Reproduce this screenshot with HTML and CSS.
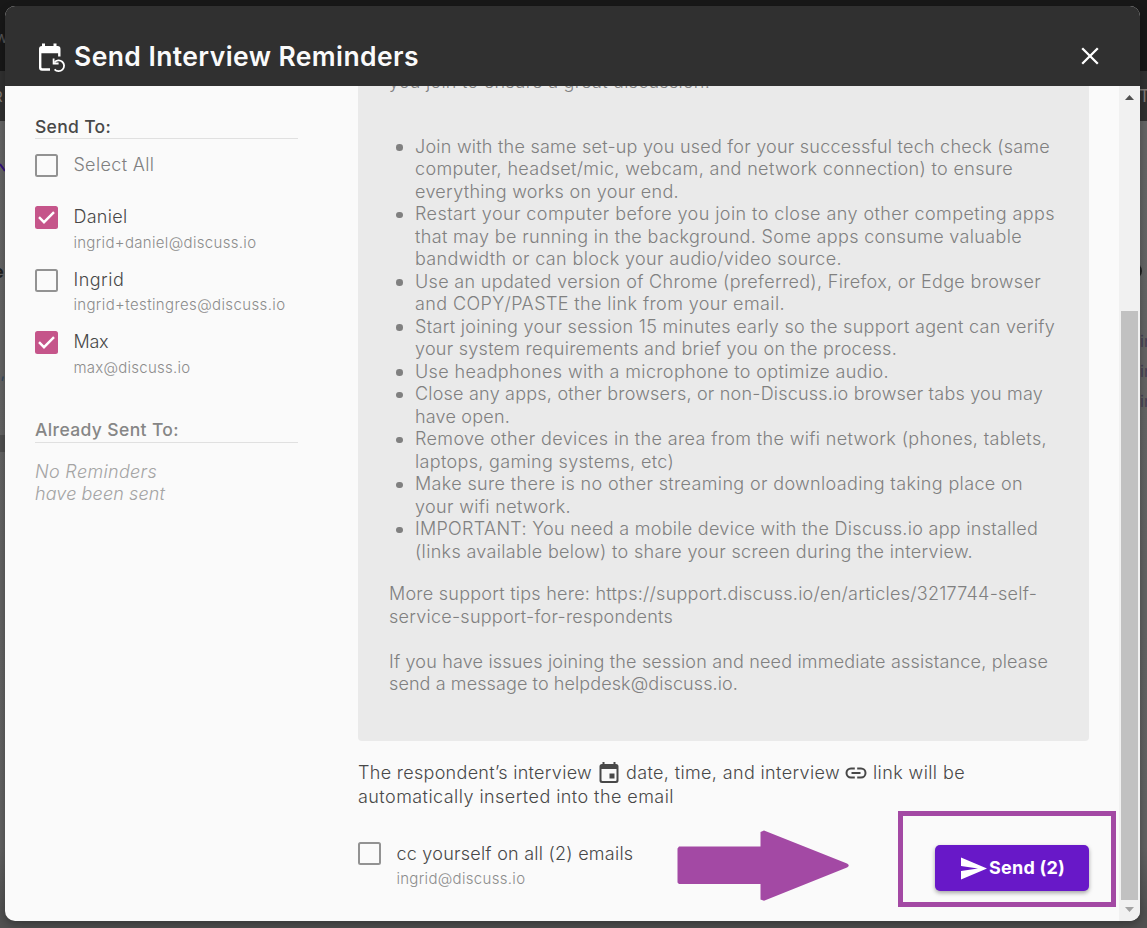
FILE: index.html
```html
<!DOCTYPE html>
<html lang="en">
<head>
<meta charset="utf-8">
<title>Send Interview Reminders</title>
<link rel="stylesheet" href="styles.css">
</head>
<body>
<div class="page">
  <div class="page-nav"></div>
  <div class="page-tabs"></div>
  <div class="page-body"></div>
  <span class="peek peek-nav">w</span>
  <span class="peek peek-r">R</span>
  <span class="peek peek-t">T</span>
  <span class="peek peek-e">e</span>
  <span class="peek peek-s">s,</span>
  <span class="peek-row"></span>
  <svg class="peek-line" width="5" height="14" viewBox="0 0 5 14"><path d="M0 2 5 9" stroke="#34117a" stroke-width="2"/></svg>
  <span class="peek-dot"></span>
  <span class="peek peek-in in1">in</span>
  <span class="peek peek-in in2">in</span>
  <span class="peek peek-in in3">in</span>
</div>

<div class="modal">
  <header class="modal-head">
    <svg class="head-icon" width="28" height="30" viewBox="0 0 28 30">
      <path d="M4 .5h3v2.500h8.500V.5h3v2.500h1q3 0 3 3v7.500h-2.400V10.300H3.400v14q0 1 1 1H12v2.400H4q-3 0-3-3V6q0-3 3-3z" fill="#fff"/>
      <path d="M16.400 19.500A5.400 5.400 0 1 1 16.600 26.300" fill="none" stroke="#fff" stroke-width="1.800"/>
      <path d="M15.600 15.500v5h5" fill="none" stroke="#fff" stroke-width="1.800"/>
    </svg>
    <h1 class="title"><span data-w="344">Send Interview Reminders</span></h1>
    <svg class="close" width="18" height="18" viewBox="0 0 18 18"><path d="M1.200 1.200 16.800 16.800M16.800 1.200 1.200 16.800" stroke="#fff" stroke-width="2.300"/></svg>
  </header>

  <div class="modal-body">
    <aside class="side">
      <h2 class="side-title"><span data-w="75">Send To:</span></h2>
      <label class="row all"><i class="box"></i><span class="who"><span class="name muted" data-w="80">Select All</span></span></label>
      <label class="row first"><i class="box on"><svg width="23" height="23" viewBox="0 0 23 23"><path d="M4 11.200 9 16.200 19 6.200" fill="none" stroke="#fff" stroke-width="2.400"/></svg></i><span class="who"><span class="name" data-w="53">Daniel</span><span class="mail" data-w="182">ingrid+daniel@discuss.io</span></span></label>
      <label class="row"><i class="box"></i><span class="who"><span class="name" data-w="50">Ingrid</span><span class="mail" data-w="211">ingrid+testingres@discuss.io</span></span></label>
      <label class="row"><i class="box on"><svg width="23" height="23" viewBox="0 0 23 23"><path d="M4 11.200 9 16.200 19 6.200" fill="none" stroke="#fff" stroke-width="2.400"/></svg></i><span class="who"><span class="name" data-w="34">Max</span><span class="mail" data-w="116">max@discuss.io</span></span></label>
      <h2 class="side-title sent"><span data-w="143">Already Sent To:</span></h2>
      <p class="none"><span data-w="121">No Reminders</span><br><span data-w="129">have been sent</span></p>
    </aside>

    <main class="main">
      <section class="message">
        <p class="intro"><span data-w="320">you join to ensure a great discussion!</span></p>
        <ul class="tips">
          <li><span data-w="634">Join with the same set-up you used for your successful tech check (same</span><br><span data-w="597">computer, headset/mic, webcam, and network connection) to ensure</span><br><span data-w="263">everything works on your end.</span></li>
          <li><span data-w="639">Restart your computer before you join to close any other competing apps</span><br><span data-w="606">that may be running in the background. Some apps consume valuable</span><br><span data-w="426">bandwidth or can block your audio/video source.</span></li>
          <li><span data-w="625">Use an updated version of Chrome (preferred), Firefox, or Edge browser</span><br><span data-w="369">and COPY/PASTE the link from your email.</span></li>
          <li><span data-w="639">Start joining your session 15 minutes early so the support agent can verify</span><br><span data-w="481">your system requirements and brief you on the process.</span></li>
          <li><span data-w="473">Use headphones with a microphone to optimize audio.</span></li>
          <li><span data-w="627">Close any apps, other browsers, or non-Discuss.io browser tabs you may</span><br><span data-w="94">have open.</span></li>
          <li><span data-w="631">Remove other devices in the area from the wifi network (phones, tablets,</span><br><span data-w="258">laptops, gaming systems, etc)</span></li>
          <li><span data-w="607">Make sure there is no other streaming or downloading taking place on</span><br><span data-w="155">your wifi network.</span></li>
          <li><span data-w="622">IMPORTANT: You need a mobile device with the Discuss.io app installed</span><br><span data-w="557">(links available below) to share your screen during the interview.</span></li>
        </ul>
        <p><span data-w="647">More support tips here: https://support.discuss.io/en/articles/3217744-self-</span><br><span data-w="283">service-support-for-respondents</span></p>
        <p class="help"><span data-w="658">If you have issues joining the session and need immediate assistance, please</span><br><span data-w="348">send a message to helpdesk@discuss.io.</span></p>
      </section>

      <div class="note">
        <div class="note-line">
          <span data-w="233">The respondent’s interview</span>
          <svg class="cal" width="20" height="22" viewBox="0 0 20 22"><path fill-rule="evenodd" d="M3.500 0h2v2h9V0h2v2h.5q2.500 0 2.500 2.500v14q0 2.500-2.500 2.500H3Q.5 21 .5 18.500v-14Q.5 2 3 2h.5zM2.500 7v11q0 1 1 1h13q1 0 1-1V7zM10.500 11.500h5v5h-5z" fill="#484848"/></svg>
          <span data-w="213">date, time, and interview</span>
          <svg class="link" width="22" height="12" viewBox="0 0 22 12"><path d="M9.800 1.500H6a4.500 4.500 0 0 0 0 9H9.800M12.200 1.500H16a4.500 4.500 0 0 1 0 9H12.200M6.500 6h9" fill="none" stroke="#484848" stroke-width="2"/></svg>
          <span data-w="91">link will be</span>
        </div>
        <div class="note-line"><span data-w="315">automatically inserted into the email</span></div>
      </div>

      <footer class="foot">
        <label class="row cc"><i class="box"></i><span class="who"><span class="name" data-w="236">cc yourself on all (2) emails</span><span class="mail" data-w="128">ingrid@discuss.io</span></span></label>
        <svg class="arrow" width="173" height="72" viewBox="0 0 173 72"><path d="M2 16.500H83.500V2L87 .5 170 33.500Q173.500 35.500 170 37.500L87 70.800 83.500 69.500V54H2L.5 52.500v-34z" fill="#a349a4"/></svg>
        <div class="callout">
          <button class="send"><svg width="26" height="23" viewBox="0 0 26 23"><path d="M0 .5 26 11.500 0 22.500V14L17 11.500 0 9z" fill="#fff"/></svg><span data-w="75">Send (2)</span></button>
        </div>
      </footer>
    </main>

    <div class="scroll">
      <svg width="9" height="5" viewBox="0 0 9 5"><path d="M0 5 4.500 0 9 5z" fill="#505050"/></svg>
      <div class="thumb"></div>
      <svg width="9" height="5" viewBox="0 0 9 5"><path d="M0 0 4.500 5 9 0z" fill="#a3a3a3"/></svg>
    </div>
  </div>
</div>
<script src="fit.js"></script>
</body>
</html>
```

FILE: styles.css
```css
* { box-sizing: border-box; }
body {
  margin: 0;
  width: 1147px;
  height: 928px;
  overflow: hidden;
  font-family: Inter, "Liberation Sans", sans-serif;
  font-weight: 300;
  font-size: 18px;
  line-height: 22.5px;
  color: #484848;
}
h1, h2, p, ul { margin: 0; padding: 0; font: inherit; }
[data-w] { white-space: nowrap; }

/* dimmed page behind the dialog */
.page {
  position: absolute;
  inset: 0;
  overflow: hidden;
  display: flex;
  flex-direction: column;
}
.page-nav { height: 71px; background: #181818; }
.page-tabs { height: 50px; background: #313131; }
.page-body { flex: 1; background: linear-gradient(#656565, #626262 90%, #515151 98%); }
.peek { position: absolute; font-weight: 400; line-height: 20px; }
.peek-nav { left: -5px; top: 27px; font-size: 16px; color: #555; }
.peek-r { left: -7px; top: 87px; font-size: 15px; color: #827c78; }
.peek-t { left: 1139px; top: 86px; font-size: 17px; color: #827c78; }
.peek-e { left: -7px; top: 262px; font-size: 18px; font-weight: 700; color: #202020; }
.peek-s { left: -8px; top: 362px; font-size: 16px; color: #354a62; }
.peek-row { position: absolute; left: 0; top: 435px; width: 5px; height: 17px; background: #505050; }
.peek-line { position: absolute; left: 0; top: 162px; }
.peek-dot { position: absolute; left: 1126px; top: 263px; width: 16px; height: 16px; border-radius: 50%; background: #202020; }
.peek-in { left: 1140px; font-size: 16px; color: #444055; }
.in1 { top: 331px; }
.in2 { top: 361px; }
.in3 { top: 391px; }

.modal {
  position: absolute;
  left: 5px;
  top: 6px;
  width: 1135px;
  height: 915px;
  display: flex;
  flex-direction: column;
  border-radius: 10px;
  overflow: hidden;
  background: #fafafa;
  box-shadow: 0 4px 10px rgba(0, 0, 0, .3);
}
.modal-head {
  flex: none;
  height: 80px;
  display: flex;
  align-items: center;
  padding: 20px 41px 0 33px;
  background: #303030;
  color: #fafafa;
}
.head-icon { margin-top: 4px; }
.title { margin-left: 8px; flex: 1; font-size: 26.500px; font-weight: 600; line-height: 32px; }
.modal-body { flex: 1; min-height: 0; display: flex; }

/* recipients */
.side { width: 353px; padding: 29px 0 0 30px; }
.side-title { width: 263px; height: 24px; padding-top: 1px; border-bottom: 1px solid #e0e0e0; font-size: 17.500px; font-weight: 500; }
.row { display: flex; height: 62.5px; }
.box { flex: none; width: 23px; height: 23px; margin: .4px 0 0 .4px; border: 2px solid #929292; border-radius: 2.500px; }
.box.on { border: 0; background: #c5558a; }
.box svg { display: block; }
.who { display: flex; flex-direction: column; align-items: flex-start; margin-left: 15px; }
.mail { margin-top: 4px; font-size: 15px; line-height: 20px; color: #8c8c8c; }
.muted { color: #808080; }
.all { height: 36px; margin-top: 15px; }
.first { margin-top: 16px; }
.side-title.sent { margin-top: 25px; padding-top: 0; color: #868686; }
.none { margin-top: 18px; font-style: italic; color: #a4a4a4; }

/* email preview */
.main { width: 761px; overflow: hidden; }
.message {
  display: flow-root;
  width: 731px;
  height: 655px;
  padding-left: 31px;
  border-radius: 0 0 4px 4px;
  background: #eaeaea;
  color: #808080;
}
.intro { margin-top: -15px; }
.tips { margin: 42px 0 20px; padding-left: 26px; list-style: none; }
.tips li { position: relative; }
.tips li::before { content: ""; position: absolute; left: -19px; top: 8.500px; width: 6.500px; height: 6.500px; border-radius: 50%; background: #808080; }
.help { margin-top: 22.500px; }
.note { padding-top: 20px; }
.note-line { display: flex; align-items: center; height: 24px; }
.cal { margin: 0 7px 0 7px; }
.link { margin: 0 6px 0 5px; }

.foot { display: flex; height: 110px; padding-top: 2px; }
.cc { width: 319px; padding-top: 31px; }
.cc .who { padding-top: 1px; }
.cc .mail { margin-top: 3px; }
.arrow { margin-top: 18.500px; }
.callout {
  width: 218px;
  height: 96px;
  margin-left: 48px;
  padding: 29px 0 0 32px;
  border: 5px solid #a349a4;
}
.send {
  display: flex;
  align-items: center;
  width: 154px;
  height: 46px;
  padding: 0 0 0 26px;
  border: 0;
  border-radius: 5px;
  background: #6818c8;
  color: #fff;
  font: 700 18px Inter, sans-serif;
  box-shadow: 0 2px 4px rgba(0, 0, 0, .35);
}
.send span { margin-left: 2px; padding-bottom: 1px; }

.scroll {
  width: 21px;
  display: flex;
  flex-direction: column;
  align-items: center;
  padding: 9px 0;
  background: #f1f1f1;
}
.scroll svg { flex: none; }
.thumb { width: 17px; height: 589px; margin: 211px 0 7px; background: #c1c1c1; }
```

FILE: fit.js
```js
// Tracks each text run to its set measure (data-w, in px).
document.querySelectorAll('[data-w]').forEach(function (run) {
  var natural = run.getBoundingClientRect().width;
  var gap = (Number(run.dataset.w) + 1 - natural) / run.textContent.length;
  run.style.letterSpacing = gap.toFixed(3) + 'px';
});
```
